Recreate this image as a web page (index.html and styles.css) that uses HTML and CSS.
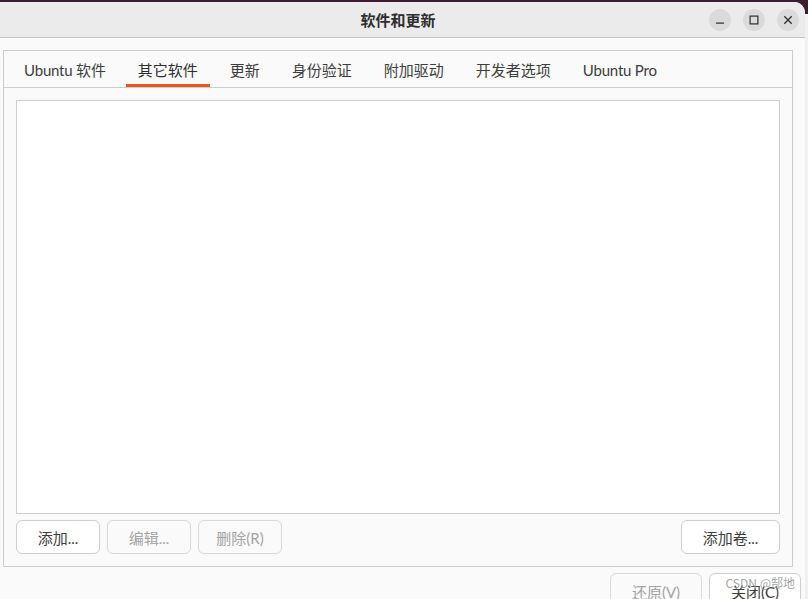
FILE: index.html
```html
<!DOCTYPE html>
<html lang="zh-CN">
<head>
<meta charset="utf-8">
<title>软件和更新</title>
<link rel="stylesheet" href="styles.css">
</head>
<body>
<div class="desk">
  <div class="window">
    <header class="titlebar">
      <div class="tb-spacer"></div>
      <div class="title">软件和更新</div>
      <div class="controls">
        <button class="wbtn" aria-label="最小化">
          <svg width="10" height="10" viewBox="0 0 10 10"><rect x="1" y="7.5" width="8" height="1.2" fill="#2e2e2e"/></svg>
        </button>
        <button class="wbtn" aria-label="最大化">
          <svg width="10" height="10" viewBox="0 0 10 10"><rect x="1.1" y="1.1" width="7.8" height="7.8" fill="none" stroke="#2e2e2e" stroke-width="1.2"/></svg>
        </button>
        <button class="wbtn" aria-label="关闭">
          <svg width="10" height="10" viewBox="0 0 10 10"><path d="M1.3 1.3 L8.7 8.7 M8.7 1.3 L1.3 8.7" stroke="#2e2e2e" stroke-width="1.3"/></svg>
        </button>
      </div>
    </header>

    <main class="body">
      <section class="notebook">
        <nav class="tabs">
          <div class="tab latin">Ubuntu 软件</div>
          <div class="tab active">其它软件</div>
          <div class="tab">更新</div>
          <div class="tab">身份验证</div>
          <div class="tab">附加驱动</div>
          <div class="tab">开发者选项</div>
          <div class="tab latin">Ubuntu Pro</div>
        </nav>
        <div class="page">
          <div class="listbox"></div>
          <div class="btnrow">
            <button class="btn">添加...</button>
            <button class="btn disabled">编辑...</button>
            <button class="btn disabled">删除(R)</button>
            <div class="grow"></div>
            <button class="btn wide">添加卷...</button>
          </div>
        </div>
      </section>

      <div class="actions">
        <button class="btn act disabled">还原(V)</button>
        <button class="btn act">关闭(C)</button>
        <div class="watermark">CSDN @郜地</div>
      </div>
    </main>
  </div>
</div>
</body>
</html>
```

FILE: styles.css
```css
html, body {
  margin: 0;
  padding: 0;
  height: 100%;
  overflow: hidden;
}

body {
  background: #f1f1f1;
  font-family: "Lato", "Noto Sans CJK SC", sans-serif;
  color: #3d3d3d;
}

.desk {
  height: 100%;
  border-top: 2px solid #3d1b30;
  box-sizing: border-box;
  display: flex;
  background: linear-gradient(to bottom, #3d1b30 0, #3d1b30 12px, #f1f1f1 12px);
}

.window {
  width: 805px;
  height: 597px;
  background: #fafafa;
  border-top-right-radius: 11px;
  overflow: hidden;
  display: flex;
  flex-direction: column;
}

.titlebar {
  height: 35px;
  flex: none;
  background: #ebebeb;
  border-bottom: 1px solid #c4c4c4;
  display: grid;
  grid-template-columns: 1fr auto 1fr;
  align-items: center;
}

.title {
  font-size: 15px;
  font-weight: bold;
  color: #2e2e2e;
  padding-right: 9px;
}

.controls {
  display: flex;
  justify-content: flex-end;
  gap: 12px;
  padding-right: 6px;
}

.wbtn {
  width: 22px;
  height: 22px;
  border-radius: 50%;
  border: none;
  background: #dadada;
  padding: 0;
  display: flex;
  align-items: center;
  justify-content: center;
}

.body {
  flex: 1;
  padding: 12px 12px 0 3px;
  display: flex;
  flex-direction: column;
}

.notebook {
  border: 1px solid #cdcdcd;
  background: #fafafa;
}

.tabs {
  height: 36px;
  border-bottom: 1px solid #cdcdcd;
  display: flex;
  gap: 8px;
  padding-left: 8px;
}

.tab {
  padding: 0 12px;
  font-size: 15px;
  color: #3d3d3d;
  white-space: nowrap;
  box-sizing: border-box;
  border-bottom: 3px solid transparent;
  height: 36px;
  line-height: 38px;
}

.tab.latin {
  letter-spacing: -0.2px;
}

.tab.active {
  border-bottom-color: #e95420;
  color: #2e2e2e;
}

.page {
  padding: 12px;
}

.listbox {
  height: 412px;
  background: #ffffff;
  border: 1px solid #cdcdcd;
}

.btnrow {
  margin-top: 6px;
  display: flex;
  gap: 7px;
}

.grow {
  flex: 1;
}

.btn {
  width: 84px;
  height: 34px;
  box-sizing: border-box;
  border: 1px solid #cfcfcf;
  border-radius: 6px;
  background: #ffffff;
  font-family: "Lato", "Noto Sans CJK SC", sans-serif;
  font-size: 15px;
  color: #3d3d3d;
  padding: 0;
}

.btn.disabled {
  background: #fafafa;
  color: #a3a3a3;
  border-color: #d8d8d8;
}

.btn.wide {
  width: 99px;
}

.actions {
  margin-top: 6px;
  margin-right: -8px;
  display: flex;
  justify-content: flex-end;
  gap: 7px;
  position: relative;
}

.btn.act {
  width: 92px;
  height: 34px;
  padding-top: 3px;
}

.watermark {
  position: absolute;
  right: 6px;
  top: 1px;
  font-size: 12px;
  color: rgba(140, 140, 140, 0.8);
  font-family: "Noto Sans CJK SC", sans-serif;
  pointer-events: none;
}
```
